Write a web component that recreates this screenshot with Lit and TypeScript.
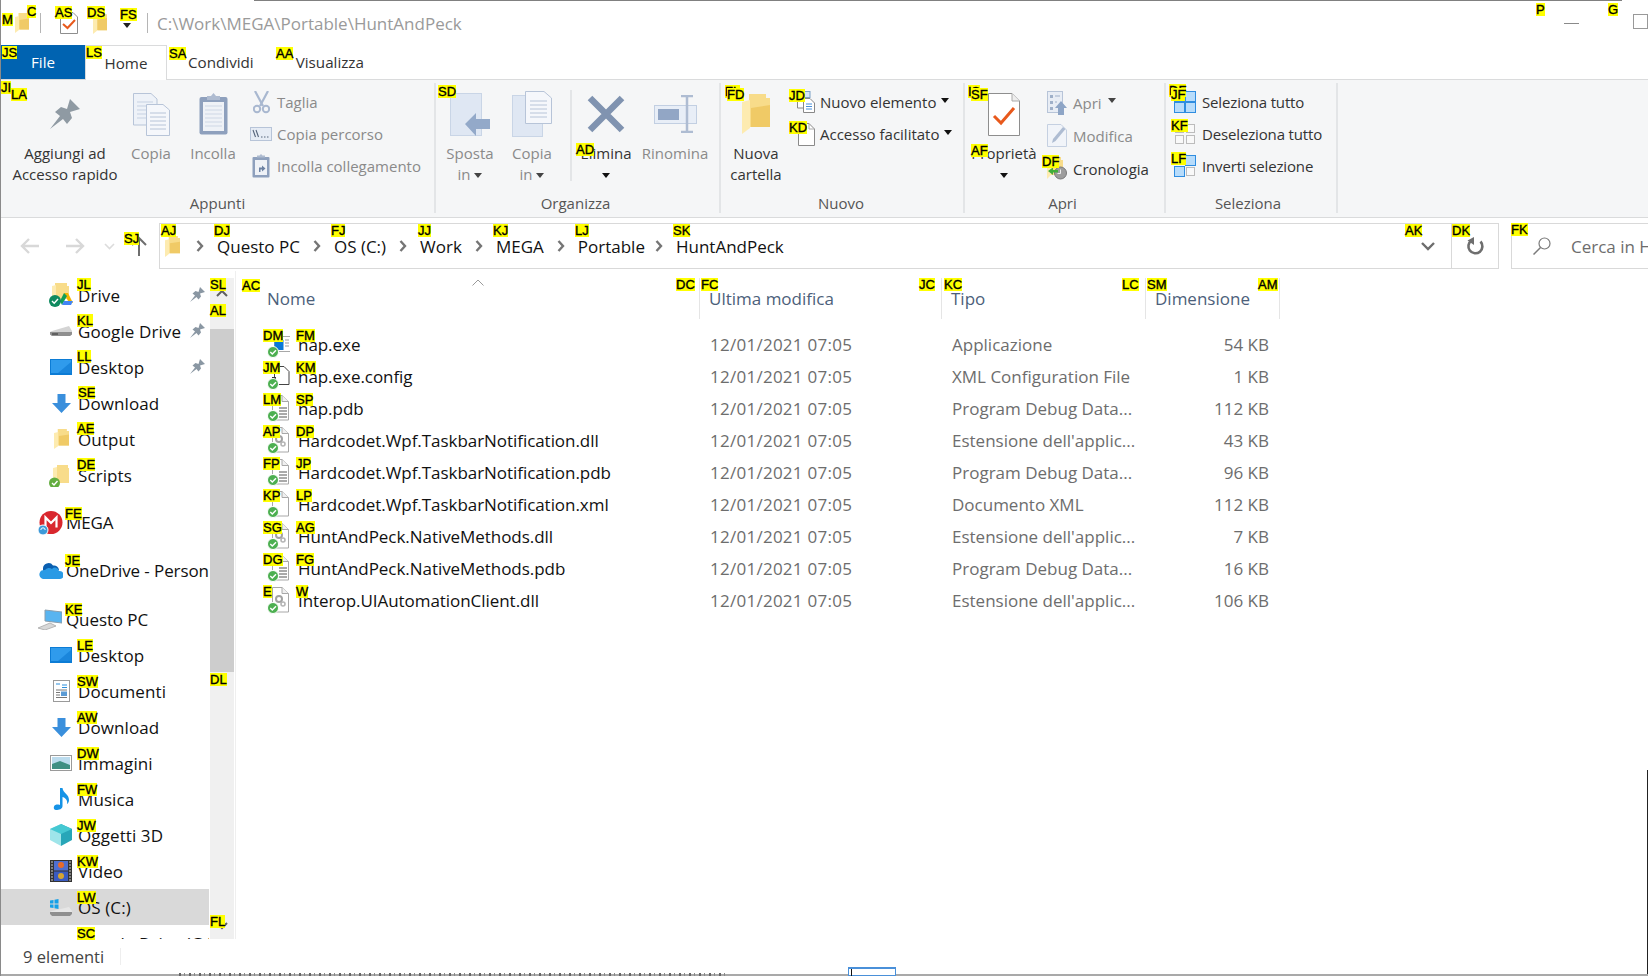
import { LitElement, html, svg, css, TemplateResult } from "lit";
import { customElement } from "lit/decorators.js";

const folder = (w: number, h: number) => html`<svg width=${w} height=${h} viewBox="0 0 28 40" preserveAspectRatio="none">
  <path d="M7 0H24V4H28V33H7Z" fill="#f8dc8a" />
  <path d="M9 14L28 11V33H9Z" fill="#f0ca66" />
  <path d="M0 8L8 6V34L0 40Z" fill="#fdebb0" />
</svg>`;

const badge = svg`<circle cx="6" cy="22" r="5.5" fill="#4caf50" stroke="#fff" stroke-width="1" />
  <path d="M3.300 22l2 2L9 20.200" fill="none" stroke="#fff" stroke-width="1.400" />`;

const docBase = (inner: TemplateResult) => html`<svg width="23" height="28" viewBox="0 0 23 28">
  <path d="M5.500 1.500H15L21.500 7.500V26H5.500Z" fill="#fff" stroke="#a8a8a8" />
  <path d="M15 1.500V7.500H21.500" fill="#f0f0f0" stroke="#a8a8a8" />
  ${inner}${badge}
</svg>`;

const pinPath = "M0 30L10 17L5 13L11 8L17 10L20 0L30 10L20 13L22 19L17 25L13 20Z";

const ICONS: Record<string, TemplateResult> = {
  fold: folder(28, 40),
  qfold: folder(14, 20),
  qfold2: folder(14, 22),
  pathfold: folder(15, 21),
  qprops: html`<svg width="18" height="22" viewBox="0 0 18 22">
    <path d="M.5.5H13L17.500 5V21.500H.5Z" fill="#fff" stroke="#8e8e8e" />
    <path d="M3 12L7.500 16L15 8" fill="none" stroke="#e8591c" stroke-width="2" />
  </svg>`,
  pin: html`<svg width="30" height="30" viewBox="0 0 30 30"><path d=${pinPath} fill="#8f9aa3" /></svg>`,
  copy: html`<svg width="37" height="43" viewBox="0 0 37 43">
    <path d="M.5.5H18L24 6V32H.5Z" fill="#eef2f8" stroke="#b7c4d8" />
    <path d="M4 9H20M4 13H20M4 17H20M4 21H20M4 25H20" stroke="#c6d1e2" />
    <path d="M13.500 11.500H30L36.500 17V42.500H13.500Z" fill="#f5f7fb" stroke="#b7c4d8" />
    <path d="M17 20H33M17 24H33M17 28H33M17 32H33M17 36H33" stroke="#b7c4d8" />
  </svg>`,
  paste: html`<svg width="31" height="44" viewBox="0 0 31 44">
    <rect x="1.500" y="5" width="28" height="37.500" rx="2" fill="#8ea0bd" />
    <rect x="5" y="10" width="21" height="29" fill="#eff2f7" />
    <path d="M7 14H24M7 18H24M7 22H24M7 26H24M7 30H24M7 34H24" stroke="#ced7e5" />
    <path d="M9 8V4H13L15.500 1L18 4H22V8Z" fill="#aebbd0" />
  </svg>`,
  cut: html`<svg width="17" height="23" viewBox="0 0 17 23">
    <path d="M2 0L10 15M15 0L7 15" stroke="#a9b8d0" stroke-width="2.200" fill="none" />
    <circle cx="4" cy="18" r="3.200" fill="none" stroke="#a9b8d0" stroke-width="2" />
    <circle cx="13" cy="18" r="3.200" fill="none" stroke="#a9b8d0" stroke-width="2" />
  </svg>`,
  copypath: html`<svg width="22" height="14" viewBox="0 0 22 14">
    <rect x=".5" y=".5" width="21" height="13" fill="#e6ecf5" stroke="#b7c4d8" />
    <path d="M3 3l2.500 7M6 3l2.500 7" stroke="#55647a" stroke-width="1.100" />
    <path d="M11 10h1.500M14 10h1.500M17 10h1.500" stroke="#55647a" />
  </svg>`,
  pastelink: html`<svg width="18" height="24" viewBox="0 0 18 24">
    <rect x=".5" y="3" width="17" height="20.500" rx="1" fill="#8ea0bd" />
    <rect x="3" y="6" width="12" height="15" fill="#eff2f7" />
    <path d="M5 3.500V1.500H7.500L9 0L10.500 1.500H13V3.500Z" fill="#aebbd0" />
    <path d="M7 18V13.500H10V11.500L13.500 14.500L10 17.500V15.500H8.500V18Z" fill="#6d82a3" />
  </svg>`,
  move: html`<svg width="40" height="43" viewBox="0 0 40 43">
    <rect x=".5" y=".5" width="31" height="42" fill="#dfe7f3" stroke="#c9d5e6" />
    <path d="M15 31L26 20V26H40V36H26V43Z" fill="#93a9c9" />
  </svg>`,
  copyto: html`<svg width="40" height="46" viewBox="0 0 40 46">
    <rect x=".5" y="4.500" width="30" height="41" fill="#dfe7f3" stroke="#c9d5e6" />
    <path d="M13.500.5H32L39.500 7V32.500H13.500Z" fill="#f5f7fb" stroke="#b7c4d8" />
    <path d="M18 10H35M18 14H35M18 18H35M18 22H35M18 26H35" stroke="#b7c4d8" />
  </svg>`,
  del: html`<svg width="38" height="38" viewBox="0 0 38 38"><path d="M3 3L35 35M35 3L3 35" stroke="#8093b0" stroke-width="6.500" /></svg>`,
  rename: html`<svg width="43" height="38" viewBox="0 0 43 38">
    <rect x=".5" y="10.500" width="42" height="18" fill="#e8eef7" stroke="#c2cfe2" />
    <rect x="4" y="14" width="21" height="11" fill="#92a6c5" />
    <path d="M27 1H39M33 1V37M27 37H39" stroke="#aebcd2" stroke-width="2.500" fill="none" />
  </svg>`,
  newitem: html`<svg width="18" height="22" viewBox="0 0 18 22">
    <rect x="5" y=".5" width="8" height="6" fill="#d5e5f5" stroke="#7a9fc5" />
    <path d="M.5 8.500H8V17H.5Z" fill="#fff" stroke="#888" />
    <path d="M6.500 7.500H13L17.500 12V21.500H6.500Z" fill="#fff" stroke="#888" />
    <path d="M9 13H15M9 15.500H15M9 18H15" stroke="#4a90d9" />
  </svg>`,
  easy: html`<svg width="17" height="23" viewBox="0 0 17 23">
    <path d="M.5.5H11L16.500 6V22.500H.5Z" fill="#fff" stroke="#8a8a8a" />
    <path d="M11 .5V6H16.500" fill="none" stroke="#aaa" />
  </svg>`,
  props: html`<svg width="32" height="43" viewBox="0 0 32 43">
    <path d="M.5.5H24L31.500 8V42.500H.5Z" fill="#fff" stroke="#8e8e8e" />
    <path d="M24 .5V8H31.500" fill="#eee" stroke="#aaa" />
    <path d="M6 23L13 30L26 15" fill="none" stroke="#e8591c" stroke-width="3" />
  </svg>`,
  open: html`<svg width="20" height="24" viewBox="0 0 20 24">
    <rect x=".5" y=".5" width="15" height="21" fill="#e8edf5" stroke="#b7c4d8" />
    <path d="M3 4h3v3H3zM3 10h3v3H3zM3 16h3v3H3z" fill="#9fb0c9" />
    <path d="M8 5h5M8 11h2" stroke="#9fb0c9" />
    <path d="M8 17L14 10L20 17H17V24H11V17Z" fill="#8ea5c6" />
  </svg>`,
  edit: html`<svg width="20" height="23" viewBox="0 0 20 23">
    <path d="M.5.5H14L19.500 6V22.500H.5Z" fill="#f1f4f9" stroke="#c5d0e1" />
    <path d="M5 19L6 15L16 3L18.500 5L8.500 17Z" fill="#aebcd2" />
  </svg>`,
  history: html`<svg width="20" height="23" viewBox="0 0 20 23">
    <path d="M3 0H14V3H16V18H3Z" fill="#f8dc8a" />
    <path d="M0 3L4 2V18L0 22Z" fill="#fdebb0" />
    <circle cx="13.500" cy="16" r="6" fill="#9d9d9d" stroke="#777" />
    <path d="M13.500 12.500V16.500H10.500" fill="none" stroke="#eee" />
    <path d="M1 14L6 10.500V13H11V15.500H6V18Z" fill="#3fae3a" />
  </svg>`,
  selall: html`<svg width="22" height="22" viewBox="0 0 22 22" fill="#b7dcfb" stroke="#2f8de0">
    <rect x=".5" y="11.500" width="10" height="10" /><rect x="11.500" y="11.500" width="10" height="10" />
    <rect x="11.500" y=".5" width="10" height="10" /><rect x=".5" y=".5" width="10" height="10" />
  </svg>`,
  selnone: html`<svg width="22" height="22" viewBox="0 0 22 22" fill="#f9f9f9" stroke="#bcbcbc">
    <rect x="1.500" y="12.500" width="8" height="8" /><rect x="12.500" y="12.500" width="8" height="8" />
    <rect x="12.500" y="1.500" width="8" height="8" /><rect x="1.500" y="1.500" width="8" height="8" />
  </svg>`,
  selinv: html`<svg width="22" height="22" viewBox="0 0 22 22" fill="#b7dcfb" stroke="#2f8de0">
    <rect x=".5" y="11.500" width="10" height="10" /><rect x="11.500" y=".5" width="10" height="10" />
    <rect x="12.500" y="12.500" width="8" height="8" fill="#f9f9f9" stroke="#bcbcbc" />
    <rect x="1.500" y="1.500" width="8" height="8" fill="#f9f9f9" stroke="#bcbcbc" />
  </svg>`,
  qatcaret: html`<svg width="10" height="10" viewBox="0 0 10 10"><path d="M0 .5H10" stroke="#222" /><path d="M1 4H9L5 9Z" fill="#222" /></svg>`,
  back: html`<svg width="20" height="16" viewBox="0 0 20 16"><path d="M19 8H2M9 1L2 8L9 15" fill="none" stroke="#d8d8d8" stroke-width="2.400" /></svg>`,
  forward: html`<svg width="20" height="16" viewBox="0 0 20 16"><path d="M1 8H18M11 1L18 8L11 15" fill="none" stroke="#d8d8d8" stroke-width="2.400" /></svg>`,
  down: html`<svg width="11" height="7" viewBox="0 0 11 7"><path d="M1 1L5.500 5.500L10 1" fill="none" stroke="#dcdcdc" stroke-width="1.600" /></svg>`,
  up: html`<svg width="16" height="20" viewBox="0 0 16 20"><path d="M8 20V2M1 9L8 2L15 9" fill="none" stroke="#6e6e6e" stroke-width="2" /></svg>`,
  crumb: html`<svg width="8" height="12" viewBox="0 0 8 12"><path d="M1.500 1L6 6L1.500 11" fill="none" stroke="#757575" stroke-width="2.400" /></svg>`,
  chevdown: html`<svg width="14" height="9" viewBox="0 0 14 9"><path d="M1 1L7 7L13 1" fill="none" stroke="#6d6d6d" stroke-width="2.400" /></svg>`,
  refresh: html`<svg width="18" height="18" viewBox="0 0 18 18">
    <path d="M5.500 3.500A7 7 0 1 0 14.500 4.500" fill="none" stroke="#6e6e6e" stroke-width="2.600" />
    <path d="M8 0V8L1.500 3.500Z" fill="#6e6e6e" />
  </svg>`,
  search: html`<svg width="18" height="18" viewBox="0 0 18 18">
    <circle cx="11.500" cy="6.500" r="5.500" fill="none" stroke="#7a7a7a" stroke-width="1.200" />
    <path d="M7.500 10.500L.5 17.500" stroke="#7a7a7a" stroke-width="1.500" />
  </svg>`,
  sort: html`<svg width="12" height="7" viewBox="0 0 12 7"><path d="M.5 6.500L6 1L11.500 6.500" fill="none" stroke="#9a9a9a" /></svg>`,
  scrollup: html`<svg width="12" height="8" viewBox="0 0 12 8"><path d="M1 7L6 2L11 7" fill="none" stroke="#606060" stroke-width="2" /></svg>`,
  scrolldown: html`<svg width="12" height="8" viewBox="0 0 12 8"><path d="M1 1L6 6L11 1" fill="none" stroke="#606060" stroke-width="2" /></svg>`,
  navpin: html`<svg width="15" height="15" viewBox="0 0 30 30"><path d=${pinPath} fill="#8a97a3" /></svg>`,
  drive: html`<svg width="24" height="24" viewBox="0 0 24 24">
    <path d="M6 0H18V3H20V16H6Z" fill="#f8dc8a" /><path d="M3 3L7 2V18L3 20Z" fill="#fdebb0" />
    <path d="M15 10H19L24 20H20Z" fill="#f4b400" /><path d="M15 10L11 18L13 22L18 13Z" fill="#0f9d58" />
    <path d="M13 22L15 18H24L22 22Z" fill="#4285f4" />
    <circle cx="6" cy="18" r="6" fill="#0f8a5f" /><path d="M3 18l2.200 2.200L9 16" fill="none" stroke="#fff" stroke-width="1.400" />
  </svg>`,
  hdd: html`<svg width="22" height="10" viewBox="0 0 22 10">
    <path d="M2 5L19 0L22 5V8L20 10H2L0 8V6Z" fill="#d4d4d4" />
    <path d="M0 6H22V8.500L20 10H2L0 8.500Z" fill="#8f8f8f" /><path d="M2 8H8" stroke="#333" />
  </svg>`,
  desktop: html`<svg width="22" height="16" viewBox="0 0 22 16">
    <rect width="22" height="16" fill="#0c7cd5" /><rect x="1" y="1" width="20" height="13" fill="#2f9bec" />
    <path d="M8 14L21 3V14Z" fill="#1a86dc" />
  </svg>`,
  download: html`<svg width="19" height="19" viewBox="0 0 19 19"><path d="M5.500 0H13.500V9H19L9.500 19L0 9H5.500Z" fill="#3a8fdc" /></svg>`,
  navfolder: folder(15, 20),
  scripts: html`<svg width="24" height="24" viewBox="0 -2 24 24">
    <path d="M8 0H19V3H20V18H8Z" fill="#f8dc8a" /><path d="M4 3L8 2V19L4 22Z" fill="#fdebb0" />
    <circle cx="5.500" cy="18" r="5.500" fill="#63ad3f" /><path d="M3 18l2 2L8.500 16" fill="none" stroke="#fff" stroke-width="1.400" />
  </svg>`,
  mega: html`<svg width="25" height="24" viewBox="0 0 25 24">
    <circle cx="13" cy="11.500" r="11.500" fill="#d9272e" />
    <path d="M7.500 16.500V6.500L13 12L18.500 6.500V16.500" fill="none" stroke="#fff" stroke-width="2.200" />
    <circle cx="5" cy="19" r="5" fill="#3d9ad9" stroke="#fff" /><path d="M2.800 19a2.200 2.200 0 0 1 4.400 0" fill="none" stroke="#fff" />
  </svg>`,
  onedrive: html`<svg width="25" height="16" viewBox="0 0 25 16">
    <path d="M5 6A5.500 5.500 0 0 1 15 2.500A5 5 0 0 1 21 7L5 12Z" fill="#0a5fb0" />
    <path d="M5 16H22A3 3 0 0 0 21 8A4 4 0 0 0 14 6A5 5 0 0 0 7 7A4.500 4.500 0 0 0 5 16Z" fill="#2a9ae5" />
  </svg>`,
  pc: html`<svg width="24" height="21" viewBox="0 0 24 21">
    <path d="M7 1L24 3V14L7 12Z" fill="#58b4f0" stroke="#8a9dac" />
    <path d="M0 19L12 14L18 17L7 21Z" fill="#d8d8d8" stroke="#b5b5b5" />
  </svg>`,
  docs: html`<svg width="17" height="22" viewBox="0 0 17 22">
    <rect x=".5" y=".5" width="16" height="21" fill="#fff" stroke="#9a9a9a" />
    <path d="M3 4H7M9 5H14M9 7.500H14" stroke="#2d8fdc" />
    <path d="M3 10H14M3 12.500H7M3 15H7M3 17.500H14" stroke="#777" /><rect x="8" y="11.500" width="6" height="4.500" fill="#5b9bd5" />
  </svg>`,
  images: html`<svg width="22" height="16" viewBox="0 0 22 16">
    <rect x=".5" y=".5" width="21" height="15" fill="#fff" stroke="#9a9a9a" /><rect x="2" y="2" width="18" height="12" fill="#bcdcee" />
    <path d="M2 9L10 6L20 10V14H2Z" fill="#3f8f83" />
  </svg>`,
  music: html`<svg width="17" height="22" viewBox="0 0 17 22">
    <path d="M7 0L9.500 0C10 5 16 6 16 12C16 14 15 15.500 14 16C15 12 12 9.500 9.500 9V18C9.500 21 6 22 3 22C0 22 0 17 3.500 16.500C5 16.200 6.500 16.500 7 17Z" fill="#1693e6" />
  </svg>`,
  cube: html`<svg width="22" height="22" viewBox="0 0 22 22">
    <path d="M11 0L22 5V16L11 22Z" fill="#27a6b8" /><path d="M11 0L0 5V16L11 22Z" fill="#9fe5ea" /><path d="M11 0L22 5L11 10L0 5Z" fill="#45c8d2" />
  </svg>`,
  video: html`<svg width="22" height="22" viewBox="0 0 22 22">
    <rect width="22" height="22" fill="#333" /><rect x="4" y="1" width="14" height="9.500" fill="#4f6fd0" /><rect x="4" y="11.500" width="14" height="9.500" fill="#3a5bc0" />
    <circle cx="11" cy="5" r="3" fill="#e86b2b" /><circle cx="11" cy="16" r="3" fill="#d6a52f" />
    <path d="M1 2h2M1 5h2M1 8h2M1 11h2M1 14h2M1 17h2M1 20h2M19 2h2M19 5h2M19 8h2M19 11h2M19 14h2M19 17h2M19 20h2" stroke="#ccc" />
  </svg>`,
  osdrive: html`<svg width="22" height="17" viewBox="0 0 22 17">
    <path d="M2 12L19 8L22 12V15L20 17H2L0 15V13Z" fill="#e6e6e6" /><path d="M0 13H22V15L20 17H2L0 15Z" fill="#8f8f8f" />
    <path d="M0 1.500L3.500 1V4.500H0ZM4.500 .8L8.500 0V4.500H4.500ZM0 5.500H3.500V9L0 8.500ZM4.500 5.500H8.500V10L4.500 9.200Z" fill="#14a0e8" />
  </svg>`,
  exe: html`<svg width="23" height="28" viewBox="0 0 23 28">
    <rect x="7.500" y="6.500" width="16" height="15" fill="#fff" stroke="#a8a8a8" /><rect x="7.500" y="10" width="9" height="10" fill="#0a78d7" />
    <path d="M18 10H22M18 13H22M18 16H22" stroke="#999" />${badge}
  </svg>`,
  config: html`<svg width="23" height="28" viewBox="0 0 23 28">
    <path d="M7.500 4.500H17L22 9.500V22.500H7.500Z" fill="#fff" stroke="#444" />
    <path d="M5 15h4v6H5z" fill="#333" />${badge}
  </svg>`,
  pdb: docBase(svg`<path d="M12 14H20M12 17H20M12 20H20M12 23H20" stroke="#555" />`),
  dll: docBase(svg`<circle cx="12" cy="13" r="3" fill="none" stroke="#a2a2a2" stroke-width="2" /><circle cx="16" cy="18" r="2" fill="none" stroke="#b5b5b5" stroke-width="1.600" />`),
  xml: docBase(svg``),
};

type Tip = [string, number, number];
const rowTips: [string, string][] = [
  ["DM", "FM"], ["JM", "KM"], ["LM", "SP"], ["AP", "DP"], ["FP", "JP"], ["KP", "LP"], ["SG", "AG"], ["DG", "FG"], ["E", "W"],
];
const KEYTIPS: Tip[] = [
  ["M", 2, 13], ["C", 27, 5], ["AS", 55, 6], ["DS", 87, 6], ["FS", 120, 8], ["P", 1536, 3], ["G", 1608, 3],
  ["JS", 2, 46], ["LS", 86, 46], ["SA", 169, 47], ["AA", 276, 47],
  ["JI", 1, 81], ["LA", 11, 88], ["SD", 438, 85], ["AD", 576, 143],
  ["FL", 725, 85], ["FD", 727, 88], ["JD", 789, 89], ["KD", 789, 121],
  ["IS", 968, 85], ["SF", 971, 88], ["AF", 971, 144], ["DF", 1042, 155],
  ["DF", 1169, 84], ["JF", 1171, 88], ["KF", 1171, 119], ["LF", 1171, 152],
  ["SJ", 124, 232], ["AJ", 161, 224], ["DJ", 214, 224], ["FJ", 331, 224], ["JJ", 418, 224], ["KJ", 493, 224],
  ["LJ", 575, 224], ["SK", 673, 224], ["AK", 1405, 224], ["DK", 1452, 224], ["FK", 1511, 223],
  ["AC", 242, 279], ["DC", 676, 278], ["FC", 701, 278], ["JC", 919, 278], ["KC", 944, 278], ["LC", 1122, 278], ["SM", 1147, 278], ["AM", 1258, 278],
  ["SL", 210, 278], ["AL", 210, 304], ["DL", 210, 673], ["FL", 210, 915],
  ["JL", 77, 278], ["KL", 77, 314], ["LL", 77, 350], ["SE", 78, 386], ["AE", 77, 422], ["DE", 77, 458],
  ["FE", 65, 507], ["JE", 65, 554], ["KE", 65, 603],
  ["LE", 77, 639], ["SW", 77, 675], ["AW", 77, 711], ["DW", 77, 747], ["FW", 77, 783], ["JW", 77, 819], ["KW", 77, 855], ["LW", 77, 891], ["SC", 77, 927],
  ...rowTips.flatMap(([a, b], i): Tip[] => [[a, 263, 329 + i * 32], [b, 296, 329 + i * 32]]),
];

const NAV = [
  { t: "Drive", i: "drive", pin: true },
  { t: "Google Drive", i: "hdd", pin: true },
  { t: "Desktop", i: "desktop", pin: true },
  { t: "Download", i: "download" },
  { t: "Output", i: "navfolder" },
  { t: "Scripts", i: "scripts" },
  { t: "MEGA", i: "mega", top: true, gap: "g11" },
  { t: "OneDrive - Personal", i: "onedrive", top: true, gap: "g12" },
  { t: "Questo PC", i: "pc", top: true, gap: "g13" },
  { t: "Desktop", i: "desktop" },
  { t: "Documenti", i: "docs" },
  { t: "Download", i: "download" },
  { t: "Immagini", i: "images" },
  { t: "Musica", i: "music" },
  { t: "Oggetti 3D", i: "cube" },
  { t: "Video", i: "video" },
  { t: "OS (C:)", i: "osdrive", sel: true },
  { t: "Google Drive (G:)", i: "" },
];

const DEBUG = "Program Debug Data...";
const EXT = "Estensione dell'applic...";
const FILES = [
  ["nap.exe", "exe", "Applicazione", "54 KB"],
  ["nap.exe.config", "config", "XML Configuration File", "1 KB"],
  ["nap.pdb", "pdb", DEBUG, "112 KB"],
  ["Hardcodet.Wpf.TaskbarNotification.dll", "dll", EXT, "43 KB"],
  ["Hardcodet.Wpf.TaskbarNotification.pdb", "pdb", DEBUG, "96 KB"],
  ["Hardcodet.Wpf.TaskbarNotification.xml", "xml", "Documento XML", "112 KB"],
  ["HuntAndPeck.NativeMethods.dll", "dll", EXT, "7 KB"],
  ["HuntAndPeck.NativeMethods.pdb", "pdb", DEBUG, "16 KB"],
  ["Interop.UIAutomationClient.dll", "dll", EXT, "106 KB"],
];

const CRUMBS = ["Questo PC", "OS (C:)", "Work", "MEGA", "Portable", "HuntAndPeck"];

@customElement("app-root")
export class AppRoot extends LitElement {
  static styles = css`
    :host {
      display: block;
      position: relative;
      width: 1648px;
      height: 976px;
      overflow: hidden;
      background: #fff;
      font-family: "Open Sans", "Liberation Sans", sans-serif;
      color: #111;
    }
    .win {
      display: flex;
      flex-direction: column;
      height: 976px;
      border-left: 1px solid #8a8a8a;
      box-sizing: border-box;
    }
    .backline {
      height: 1px;
      margin: 0 26px 0 253px;
      background: #808080;
    }
    .title {
      height: 44px;
      display: flex;
      align-items: center;
      font-size: 17px;
      color: #9a9a9a;
    }
    .qat {
      display: flex;
      align-items: center;
    }
    .qat > * {
      display: flex;
      flex: none;
    }
    .q-fold {
      margin-left: 14px;
    }
    .q-sep1 {
      margin-left: 11px;
    }
    .q-props {
      margin-left: 19px;
    }
    .q-fold2 {
      margin-left: 15px;
    }
    .q-caret {
      margin: 2px 0 0 15px;
    }
    .q-sep2 {
      margin-left: 15px;
    }
    .q-path {
      margin-left: 9px;
    }
    .tsep {
      width: 1px;
      height: 20px;
      background: #b5b5b5;
    }
    .winbtns {
      margin-left: auto;
      display: flex;
      align-items: center;
    }
    .min {
      width: 15px;
      height: 1px;
      background: #8a8a8a;
      margin-right: 54px;
    }
    .max {
      width: 13px;
      height: 13px;
      border: 1px solid #999;
      margin-bottom: 3px;
    }
    .tabs {
      height: 34px;
      display: flex;
      font-size: 15.2px;
      line-height: 35px;
      color: #333;
    }
    .tab {
      padding: 0 21px;
    }
    .tab.file {
      width: 84px;
      padding: 0;
      box-sizing: border-box;
      text-align: center;
      background: #0063b1;
      color: #fff;
    }
    .tab.home {
      border: 1px solid #dadbdc;
      border-bottom: none;
      width: 82px;
      box-sizing: border-box;
      padding: 0;
      text-align: center;
      background: #fff;
      height: 35px;
      position: relative;
      z-index: 1;
    }
    .ribbon {
      height: 139px;
      box-sizing: border-box;
      border-top: 1px solid #dadbdc;
      border-bottom: 1px solid #dadbdc;
      background: #f5f6f7;
      display: flex;
      padding-top: 3px;
      font-size: 15px;
    }
    .group {
      display: flex;
      flex-direction: column;
      height: 130px;
      border-right: 2px solid #e3e5e7;
      box-sizing: border-box;
    }
    .gbody {
      height: 110px;
      display: flex;
    }
    .glabel {
      height: 20px;
      line-height: 20px;
      text-align: center;
      color: #555;
    }
    .g-appunti {
      width: 435px;
    }
    .g-appunti .gbody {
      padding-left: 5px;
    }
    .g-org {
      width: 285px;
    }
    .g-org .gbody {
      padding-left: 4px;
    }
    .g-org .glabel {
      padding-right: 4px;
    }
    .g-nuovo {
      width: 244px;
    }
    .g-nuovo .gbody {
      padding-left: 2px;
    }
    .g-nuovo .glabel {
      padding-right: 2px;
    }
    .g-apri {
      width: 201px;
    }
    .g-apri .gbody {
      padding-left: 1px;
    }
    .g-apri .glabel {
      padding-right: 4px;
    }
    .g-sel {
      width: 172px;
    }
    .g-sel .gbody {
      padding-left: 8px;
      letter-spacing: -0.15px;
    }
    .g-sel .glabel {
      padding-right: 6px;
    }
    .large {
      display: flex;
      flex-direction: column;
      align-items: center;
      padding-top: 10px;
      line-height: 21px;
      text-align: center;
      color: #333;
      flex: none;
    }
    .large .ic {
      height: 42px;
      display: flex;
      align-items: center;
      justify-content: center;
      margin-bottom: 8px;
    }
    .w54 {
      width: 54px;
    }
    .w60 {
      width: 60px;
    }
    .w64 {
      width: 64px;
    }
    .w66 {
      width: 66px;
    }
    .w68 {
      width: 68px;
    }
    .w70 {
      width: 70px;
    }
    .w76 {
      width: 76px;
    }
    .w118 {
      width: 118px;
    }
    .large.off,
    .srow.off {
      color: #8a8a8a;
    }
    .small {
      display: flex;
      flex-direction: column;
      padding-top: 3px;
    }
    .srow {
      height: 32px;
      display: flex;
      align-items: center;
      color: #333;
    }
    .srow .ic {
      width: 22px;
      margin-right: 5px;
      display: flex;
      justify-content: center;
      flex: none;
    }
    .g-appunti .small {
      margin-left: 2px;
    }
    .g-nuovo .small {
      margin-left: 6px;
    }
    .g-nuovo .srow .ic {
      margin-right: 3px;
    }
    .g-apri .small {
      margin-left: 4px;
    }
    .g-apri .srow {
      height: 33px;
    }
    .g-sel .srow .ic {
      margin-right: 6px;
    }
    .caret {
      display: inline-block;
      width: 0;
      height: 0;
      border: 4px solid transparent;
      border-top: 5px solid #444;
      border-bottom: none;
      vertical-align: middle;
    }
    .caret.dark {
      border-top-color: #111;
    }
    .srow .caret {
      margin: -4px 0 0 5px;
    }
    .g-apri .srow .caret {
      margin-left: 6px;
    }
    .sep {
      width: 2px;
      height: 91px;
      margin: 7px 0 0 6px;
      background: #e3e5e7;
      flex: none;
    }
    .addr {
      height: 53px;
      display: flex;
      align-items: flex-start;
      box-sizing: border-box;
      padding-top: 5px;
    }
    .navbtns {
      width: 158px;
      height: 46px;
      display: flex;
      align-items: center;
      flex: none;
    }
    .navbtns span {
      display: flex;
    }
    .nb-back {
      margin-left: 19px;
    }
    .nb-fwd {
      margin-left: 25px;
    }
    .nb-down {
      margin-left: 19px;
    }
    .nb-up {
      margin-left: 16px;
    }
    .path {
      width: 1293px;
      height: 46px;
      box-sizing: border-box;
      border: 1px solid #d9d9d9;
      display: flex;
      align-items: center;
      flex: none;
      font-size: 17px;
    }
    .path-fold {
      display: flex;
      margin: 0 3px 0 5px;
    }
    .path-open {
      display: flex;
      margin: 0 16px 0 auto;
    }
    .crumb {
      display: flex;
      align-items: center;
    }
    .crumb:last-of-type {
      margin-left: -3px;
    }
    .chev {
      width: 34px;
      display: flex;
      justify-content: center;
    }
    .refresh {
      width: 47px;
      height: 46px;
      box-sizing: border-box;
      border: 1px solid #d9d9d9;
      border-left: none;
      display: flex;
      align-items: center;
      justify-content: center;
      flex: none;
    }
    .search {
      margin-left: 12px;
      flex: 1;
      height: 46px;
      box-sizing: border-box;
      border: 1px solid #d9d9d9;
      border-right: none;
      display: flex;
      align-items: center;
      font-size: 17px;
      color: #6d6d6d;
      white-space: nowrap;
      overflow: hidden;
    }
    .search-ic {
      display: flex;
      margin: 0 20px 0 21px;
    }
    .body {
      flex: 1;
      display: flex;
      min-height: 0;
    }
    .nav {
      width: 208px;
      flex: none;
      overflow: hidden;
      padding-top: 6px;
      box-sizing: border-box;
      font-size: 17px;
      letter-spacing: 0.1px;
      white-space: nowrap;
    }
    .nrow {
      height: 36px;
      display: flex;
      align-items: center;
      padding-left: 48px;
    }
    .nrow.top {
      padding-left: 36px;
      letter-spacing: -0.1px;
    }
    .nrow .ic {
      width: 24px;
      margin-right: 5px;
      display: flex;
      justify-content: center;
      flex: none;
    }
    .nrow.top .ic {
      width: 26px;
      margin-right: 3px;
    }
    .nrow.sel {
      background: #d9d9d9;
    }
    .g11 {
      margin-top: 11.5px;
    }
    .g12 {
      margin-top: 12px;
    }
    .g13 {
      margin-top: 12.5px;
    }
    .npin {
      margin-left: auto;
      margin-right: 4px;
      display: flex;
      margin-top: -2px;
    }
    .sbar {
      width: 24px;
      margin-left: 1px;
      flex: none;
      background: #f0f0f0;
      display: flex;
      flex-direction: column;
      align-items: center;
    }
    .sbtn {
      height: 58px;
      width: 100%;
      display: flex;
      justify-content: center;
      padding-top: 18px;
      box-sizing: border-box;
      background: linear-gradient(#fff 7px, #f0f0f0 7px);
    }
    .thumb {
      height: 343px;
      width: 100%;
      background: #cdcdcd;
    }
    .sdown {
      margin-top: auto;
      height: 19px;
      box-sizing: border-box;
      padding-top: 2px;
      display: flex;
    }
    .list {
      flex: 1;
      margin-left: 1px;
      border-left: 1px solid #efefef;
      padding-top: 7px;
      font-size: 17px;
      white-space: nowrap;
    }
    .cols {
      display: grid;
      grid-template-columns: 464px 242px 204px 134px;
    }
    .hcell {
      height: 41px;
      box-sizing: border-box;
      border-right: 1px solid #e5e5e5;
      padding: 0 0 1px 9px;
      display: flex;
      align-items: center;
      color: #4c607a;
      position: relative;
    }
    .hcell:first-child {
      padding-left: 31px;
    }
    .sort {
      position: absolute;
      left: 236px;
      top: 1px;
      display: flex;
    }
    .rows {
      margin-top: 11px;
    }
    .row {
      height: 32px;
    }
    .row > div {
      display: flex;
      align-items: center;
      box-sizing: border-box;
      padding-bottom: 4px;
    }
    .cname {
      padding-left: 31px;
      letter-spacing: -0.05px;
    }
    .cname .ic {
      width: 23px;
      margin-right: 8px;
      display: flex;
      flex: none;
    }
    .cdate,
    .ctype {
      padding-left: 10px;
      color: #6d6d6d;
    }
    .cdate {
      letter-spacing: 0.26px;
    }
    .csize {
      justify-content: flex-end;
      padding-right: 11px;
      color: #6d6d6d;
    }
    .status {
      height: 35px;
      display: flex;
      align-items: center;
      font-size: 16.5px;
      color: #444;
      padding-left: 22px;
    }
    .status i {
      width: 1px;
      height: 17px;
      background: #eee;
      margin-left: 16px;
    }
    .edge {
      height: 2px;
      background: #a9a9a9;
    }
    .tip {
      position: absolute;
      background: #ff0;
      color: #000;
      font: 13px/13px "Liberation Sans", sans-serif;
      -webkit-text-stroke: 0.35px #000;
      height: 13px;
      z-index: 5;
    }
    .noise {
      position: absolute;
      left: 179px;
      bottom: 0;
      width: 546px;
      height: 3px;
      background: repeating-linear-gradient(90deg, #666 0 2px, transparent 2px 5px, #888 5px 6px, transparent 6px 10px);
    }
    .taskbox {
      position: absolute;
      left: 848px;
      top: 967px;
      width: 48px;
      height: 9px;
      border: 1px solid #4a90d9;
      border-top-width: 2px;
      box-sizing: border-box;
      background: #fff;
    }
    .taskbox::before {
      content: "";
      display: block;
      width: 1px;
      height: 9px;
      margin-left: 2px;
      background: #111;
    }
    .rightline {
      position: absolute;
      right: 0;
      top: 770px;
      bottom: 2px;
      width: 1px;
      background: #222;
    }
  `;

  private large(icon: string, lines: unknown[], width: string, opts: { off?: boolean; caret?: boolean } = {}) {
    return html`<div class="large ${width} ${opts.off ? "off" : ""}">
      <div class="ic">${ICONS[icon]}</div>
      ${lines.map((l) => html`<div>${l}</div>`)}
      ${opts.caret ? html`<div><span class="caret dark"></span></div>` : ""}
    </div>`;
  }

  private smallRow(icon: string, label: string, opts: { off?: boolean; caret?: boolean } = {}) {
    return html`<div class="srow ${opts.off ? "off" : ""}">
      <span class="ic">${ICONS[icon]}</span>${label}${opts.caret
        ? html`<span class="caret ${opts.off ? "" : "dark"}"></span>`
        : ""}
    </div>`;
  }

  private renderRibbon() {
    const inCaret = html`in <span class="caret"></span>`;
    return html`<div class="ribbon">
      <div class="group g-appunti">
        <div class="gbody">
          ${this.large("pin", ["Aggiungi ad", "Accesso rapido"], "w118")}
          ${this.large("copy", ["Copia"], "w54", { off: true })}
          ${this.large("paste", ["Incolla"], "w70", { off: true })}
          <div class="small">
            ${this.smallRow("cut", "Taglia", { off: true })}
            ${this.smallRow("copypath", "Copia percorso", { off: true })}
            ${this.smallRow("pastelink", "Incolla collegamento", { off: true })}
          </div>
        </div>
        <div class="glabel">Appunti</div>
      </div>
      <div class="group g-org">
        <div class="gbody">
          ${this.large("move", ["Sposta", inCaret], "w60", { off: true })}
          ${this.large("copyto", ["Copia", inCaret], "w64", { off: true })}
          <div class="sep"></div>
          ${this.large("del", ["Elimina"], "w68", { caret: true })}
          ${this.large("rename", ["Rinomina"], "w70", { off: true })}
        </div>
        <div class="glabel">Organizza</div>
      </div>
      <div class="group g-nuovo">
        <div class="gbody">
          ${this.large("fold", ["Nuova", "cartella"], "w66")}
          <div class="small">
            ${this.smallRow("newitem", "Nuovo elemento", { caret: true })}
            ${this.smallRow("easy", "Accesso facilitato", { caret: true })}
          </div>
        </div>
        <div class="glabel">Nuovo</div>
      </div>
      <div class="group g-apri">
        <div class="gbody">
          ${this.large("props", ["Proprietà"], "w76", { caret: true })}
          <div class="small">
            ${this.smallRow("open", "Apri", { off: true, caret: true })}
            ${this.smallRow("edit", "Modifica", { off: true })}
            ${this.smallRow("history", "Cronologia")}
          </div>
        </div>
        <div class="glabel">Apri</div>
      </div>
      <div class="group g-sel">
        <div class="gbody">
          <div class="small">
            ${this.smallRow("selall", "Seleziona tutto")}
            ${this.smallRow("selnone", "Deseleziona tutto")}
            ${this.smallRow("selinv", "Inverti selezione")}
          </div>
        </div>
        <div class="glabel">Seleziona</div>
      </div>
    </div>`;
  }

  render() {
    return html`<div class="win">
        <div class="backline"></div>
        <div class="title">
          <div class="qat">
            <span class="q-fold">${ICONS.qfold}</span>
            <span class="tsep q-sep1"></span>
            <span class="q-props">${ICONS.qprops}</span>
            <span class="q-fold2">${ICONS.qfold2}</span>
            <span class="q-caret">${ICONS.qatcaret}</span>
            <span class="tsep q-sep2"></span>
          </div>
          <span class="q-path">C:\\Work\\MEGA\\Portable\\HuntAndPeck</span>
          <div class="winbtns"><span class="min"></span><span class="max"></span></div>
        </div>
        <div class="tabs">
          <div class="tab file">File</div>
          <div class="tab home">Home</div>
          <div class="tab">Condividi</div>
          <div class="tab">Visualizza</div>
        </div>
        ${this.renderRibbon()}
        <div class="addr">
          <div class="navbtns">
            <span class="nb-back">${ICONS.back}</span>
            <span class="nb-fwd">${ICONS.forward}</span>
            <span class="nb-down">${ICONS.down}</span>
            <span class="nb-up">${ICONS.up}</span>
          </div>
          <div class="path">
            <span class="path-fold">${ICONS.pathfold}</span>
            ${CRUMBS.map((c) => html`<div class="crumb"><span class="chev">${ICONS.crumb}</span>${c}</div>`)}
            <span class="path-open">${ICONS.chevdown}</span>
          </div>
          <div class="refresh">${ICONS.refresh}</div>
          <div class="search"><span class="search-ic">${ICONS.search}</span>Cerca in HuntAndPeck</div>
        </div>
        <div class="body">
          <div class="nav">
            ${NAV.map(
              (n) => html`<div class="nrow ${n.top ? "top" : ""} ${n.sel ? "sel" : ""} ${n.gap ?? ""}">
                <span class="ic">${n.i ? ICONS[n.i] : ""}</span>${n.t}
                ${n.pin ? html`<span class="npin">${ICONS.navpin}</span>` : ""}
              </div>`
            )}
          </div>
          <div class="sbar">
            <div class="sbtn">${ICONS.scrollup}</div>
            <div class="thumb"></div>
            <div class="sdown">${ICONS.scrolldown}</div>
          </div>
          <div class="list">
            <div class="cols">
              <div class="hcell">Nome<span class="sort">${ICONS.sort}</span></div>
              <div class="hcell">Ultima modifica</div>
              <div class="hcell">Tipo</div>
              <div class="hcell">Dimensione</div>
            </div>
            <div class="rows">
              ${FILES.map(
                (f) => html`<div class="cols row">
                  <div class="cname"><span class="ic">${ICONS[f[1]]}</span>${f[0]}</div>
                  <div class="cdate">12/01/2021 07:05</div>
                  <div class="ctype">${f[2]}</div>
                  <div class="csize">${f[3]}</div>
                </div>`
              )}
            </div>
          </div>
        </div>
        <div class="status">9 elementi<i></i></div>
        <div class="edge"></div>
      </div>
      <div class="noise"></div>
      <div class="taskbox"></div>
      <div class="rightline"></div>
      ${KEYTIPS.map(([k, x, y]) => html`<span class="tip" style="left:${x}px;top:${y}px">${k}</span>`)}`;
  }
}
